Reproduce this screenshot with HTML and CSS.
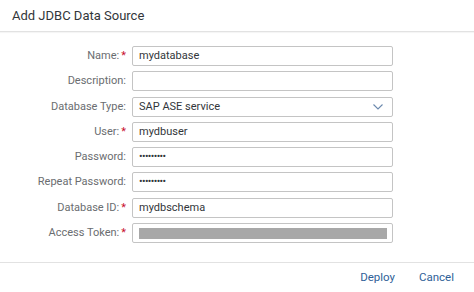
FILE: index.html
```html
<!DOCTYPE html>
<html>
<head>
	<meta charset="UTF-8">
	<title>Add JDBC Data Source</title>
	<link rel="stylesheet" href="styles.css">
</head>
<body>
	<div class="dialog">
		<div class="header">
			<h1 class="title">Add JDBC Data Source</h1>
		</div>

		<div class="content">
			<div class="form">
				<label class="label">Name:<span class="req">*</span></label>
				<div class="field">mydatabase</div>

				<label class="label">Description:</label>
				<div class="field"></div>

				<label class="label">Database Type:</label>
				<div class="field select">
					<span>SAP ASE service</span>
					<svg class="arrow" width="10" height="6" viewBox="0 0 10 6"><path d="M0.5 0.5 L5 5 L9.5 0.5" fill="none" stroke="#6b89ad" stroke-width="1.1"/></svg>
				</div>

				<label class="label">User:<span class="req">*</span></label>
				<div class="field">mydbuser</div>

				<label class="label">Password:</label>
				<div class="field"><span class="dots">•••••••••</span></div>

				<label class="label">Repeat Password:</label>
				<div class="field"><span class="dots">•••••••••</span></div>

				<label class="label">Database ID:<span class="req">*</span></label>
				<div class="field">mydbschema</div>

				<label class="label">Access Token:<span class="req">*</span></label>
				<div class="field token"><span class="hidden"></span></div>
			</div>
		</div>

		<div class="footer">
			<button class="btn">Deploy</button>
			<button class="btn">Cancel</button>
		</div>
	</div>
</body>
</html>
```

FILE: styles.css
```css
*{
	padding: 0;
	margin: 0;
	box-sizing: border-box;
}
body{
	background: #fff;
	font-family: Roboto, "Liberation Sans", sans-serif;
	color: #32363a;
}
.dialog{
	width: 474px;
	height: 292px;
	display: flex;
	flex-direction: column;
}
.header{
	height: 32px;
	border-bottom: 1px solid #e2e2e2;
	box-shadow: 0 1px 1px rgba(0,0,0,0.04);
	display: flex;
	align-items: center;
	padding-left: 12px;
}
.title{
	font-size: 13px;
	font-weight: normal;
	color: #32363a;
	margin-top: -1px;
}
.content{
	height: 230px;
	padding-top: 14px;
}
.form{
	display: grid;
	grid-template-columns: 126px 261px;
	grid-auto-rows: 20px;
	column-gap: 6px;
	row-gap: 5.3px;
}
.label{
	font-size: 11px;
	color: #6a6d70;
	text-align: right;
	line-height: 20px;
}
.req{
	color: #c8102e;
	margin-left: 2px;
}
.field{
	border: 1px solid #c4c4c4;
	border-radius: 2px;
	font-size: 11px;
	line-height: 18px;
	padding: 0 5px 0 6px;
	color: #32363a;
	display: flex;
	align-items: center;
}
.select{
	justify-content: space-between;
	padding-right: 9px;
}
.dots{
	font-size: 10.5px;
	letter-spacing: -0.6px;
	color: #32363a;
}
.hidden{
	display: block;
	width: 100%;
	height: 11px;
	background: #a8a8a8;
}
.footer{
	flex: 1;
	border-top: 1px solid #e2e2e2;
	display: flex;
	justify-content: flex-end;
	align-items: center;
	gap: 24px;
	padding-right: 20px;
	padding-bottom: 1px;
}
.btn{
	border: none;
	background: none;
	font-family: Roboto, "Liberation Sans", sans-serif;
	font-size: 11.5px;
	color: #2f5f98;
	cursor: pointer;
}
```
